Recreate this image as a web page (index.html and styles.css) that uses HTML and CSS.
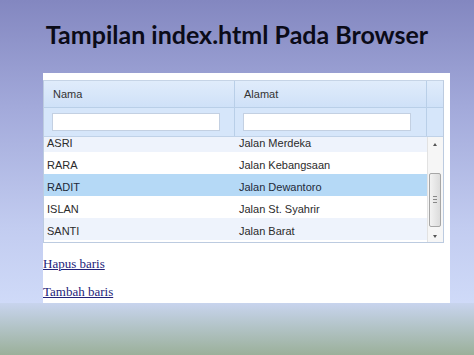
FILE: index.html
```html
<!DOCTYPE html>
<html lang="en">
<head>
  <meta charset="UTF-8">
  <title>Tampilan index.html Pada Browser</title>
  <link rel="stylesheet" href="styles.css">
</head>
<body>
  <div class="slide">
    <h1>Tampilan index.html Pada Browser</h1>
    <div class="panel">
      <div class="grid">
        <div class="head">
          <div class="hcell">Nama</div>
          <div class="hcell">Alamat</div>
          <div class="hpad"></div>
        </div>
        <div class="filter">
          <div class="fcell"><input type="text" class="finp"></div>
          <div class="fcell"><input type="text" class="finp"></div>
          <div class="hpad"></div>
        </div>
        <div class="bodywrap">
          <!-- list is scrolled down a few pixels, first row partly hidden -->
          <div class="rows">
            <div class="row alt first"><span>ASRI</span><span>Jalan Merdeka</span></div>
            <div class="row"><span>RARA</span><span>Jalan Kebangsaan</span></div>
            <div class="row sel"><span>RADIT</span><span>Jalan Dewantoro</span></div>
            <div class="row"><span>ISLAN</span><span>Jalan St. Syahrir</span></div>
            <div class="row alt"><span>SANTI</span><span>Jalan Barat</span></div>
          </div>
          <div class="sbar">
            <div class="arr up"></div>
            <div class="track"><div class="thumb"><span class="grip"></span></div></div>
            <div class="arr down"></div>
          </div>
        </div>
      </div>
      <p class="lnk"><a href="#">Hapus baris</a></p>
      <p class="lnk"><a href="#">Tambah baris</a></p>
    </div>
  </div>
  <div class="foot"></div>
</body>
</html>
```

FILE: styles.css
```css
html, body {
  margin: 0;
  height: 355px;
  overflow: hidden;
}
body {
  background: #cbd6f4;
}
.slide {
  height: 303px;
  background: linear-gradient(to bottom, #8387c0 0%, #a2a9da 35%, #c2ccf0 75%, #cfdaf8 100%);
  overflow: hidden;
}
h1 {
  margin: 0;
  padding-top: 19px;
  height: 56px;
  box-sizing: border-box;
  text-align: center;
  font-family: Lato, "Open Sans", sans-serif;
  font-weight: bold;
  font-size: 25px;
  color: #0b0b18;
}
.panel {
  margin-left: 43px;
  width: 407px;
  height: 230px;
  margin-top: 17px;
  background: #fff;
  padding-top: 7px;
  box-sizing: border-box;
}
.grid {
  width: 399px;
  border: 1px solid #bccbe0;
  border-top-color: #c6d4e6;
  font-family: "Liberation Sans", Arial, sans-serif;
  font-size: 11px;
  color: #2b2b2b;
}
.head, .filter {
  display: flex;
  background: linear-gradient(to bottom, #e0ecfb, #cfe1f8);
}
.head {
  height: 26px;
  border-bottom: 1px solid #b9cfe8;
}
.filter {
  height: 28px;
  background: #d6e6fa;
  border-bottom: 1px solid #c0d2e8;
}
.hcell, .fcell {
  width: 191px;
  border-right: 1px solid #b9cfe8;
  box-sizing: border-box;
}
.hcell + .hcell, .fcell + .fcell {
  width: 192px;
}
.hcell {
  padding: 7px 0 0 9px;
  color: #333;
}
.fcell {
  padding: 5px 0 0 8px;
}
.hpad {
  flex: 1;
}
.finp {
  display: block;
  width: 168px;
  height: 18px;
  box-sizing: border-box;
  border: 1px solid #c3d0e2;
  background: #fff;
  margin: 0;
  padding: 0;
}
.bodywrap {
  display: flex;
  height: 105px;
}
.rows {
  width: 383px;
  height: 105px;
  overflow: hidden;
}
.row {
  display: flex;
  height: 22px;
  padding-top: 3px;
  box-sizing: border-box;
  align-items: center;
  background: #fff;
}
.row.first {
  margin-top: -7px;
}
.row.alt {
  background: #eef3fc;
}
.row.sel {
  background: #b5d9f6;
  color: #1e2a3a;
}
.row span {
  width: 191px;
  padding-left: 3px;
  box-sizing: border-box;
}
.row span + span {
  padding-left: 4px;
}
.sbar {
  flex: 1;
  display: flex;
  flex-direction: column;
  background: #f6f6f6;
  border-left: 1px solid #e2e2e2;
}
.arr {
  height: 16px;
  position: relative;
}
.arr::after {
  content: "";
  position: absolute;
  left: 5px;
  border-left: 2px solid transparent;
  border-right: 2px solid transparent;
}
.arr.up::after {
  top: 6px;
  border-bottom: 3px solid #555;
}
.arr.down::after {
  top: 8px;
  border-top: 3px solid #555;
}
.track {
  flex: 1;
  padding-top: 20px;
}
.thumb {
  margin-left: 1px;
  width: 10px;
  height: 52px;
  border: 1px solid #a6a6a6;
  border-radius: 2px;
  background: linear-gradient(to right, #f2f2f2, #dcdcdc);
  position: relative;
}
.grip {
  position: absolute;
  left: 3px;
  top: 22px;
  width: 4px;
  height: 5px;
  border-top: 1px solid #888;
  border-bottom: 1px solid #888;
}
.grip::after {
  content: "";
  position: absolute;
  left: 0;
  top: 2px;
  width: 4px;
  border-top: 1px solid #888;
}
.lnk {
  margin: 13px 0 0;
  font-family: "Liberation Serif", "Times New Roman", serif;
  font-size: 13px;
  line-height: 15px;
}
.lnk + .lnk {
  margin-top: 13px;
}
.lnk a {
  color: #23237a;
}
.foot {
  height: 52px;
  background: linear-gradient(to bottom, #c8d4ee, #b3c4c8 45%, #9bb09a);
}
```
